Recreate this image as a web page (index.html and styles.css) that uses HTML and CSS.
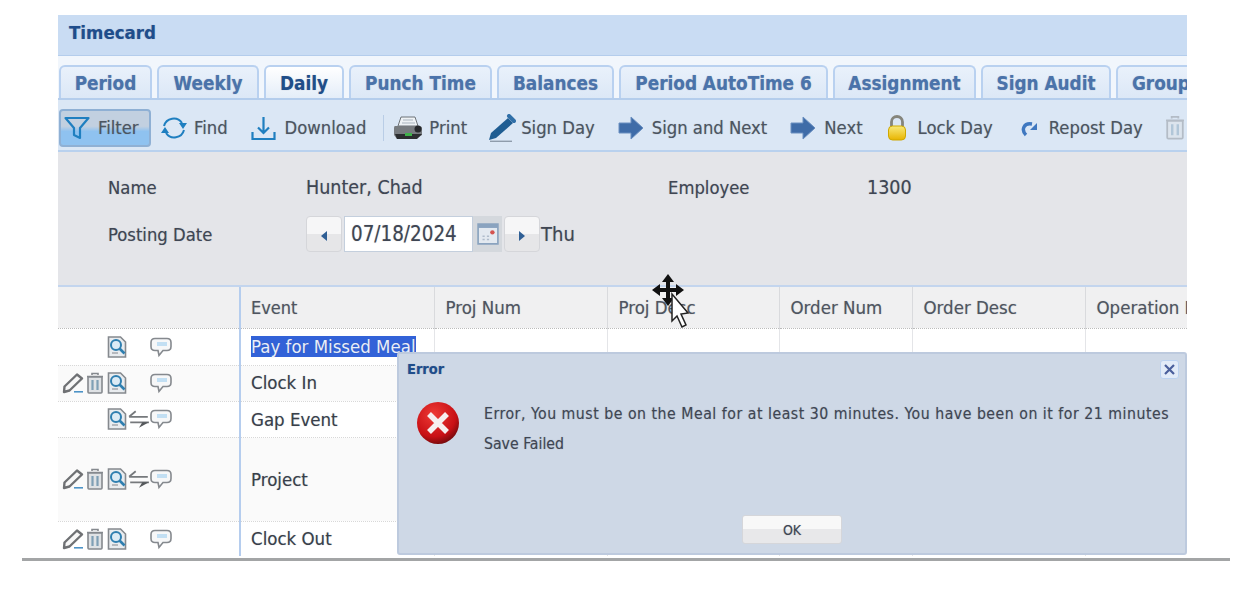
FILE: index.html
```html
<!DOCTYPE html>
<html lang="en">
<head>
  <meta charset="UTF-8">
  <title>Timecard</title>
  <link rel="stylesheet" href="styles.css">
</head>
<body>
  <svg class="sprites" width="0" height="0">
    <symbol id="i-search" viewBox="0 0 20 22">
      <path d="M1.500 1h12l5 5v15h-17z" fill="#e9ecef" stroke="#85898e" stroke-width="1.600"/>
      <circle cx="9" cy="9" r="5" fill="#dcebf5" stroke="#2f7fb0" stroke-width="2"/>
      <path d="M12.500 12.500l5 5" stroke="#2f7fb0" stroke-width="2.600"/>
      <path d="M5 17h6" stroke="#a9adb2" stroke-width="1.600"/>
    </symbol>
    <symbol id="i-comment" viewBox="0 0 22 20">
      <path d="M5 1.500h12q4 0 4 4v4q0 4-4 4h-4l-4 5-1-5H5q-4 0-4-4v-4q0-4 4-4z" fill="#f6f7f8" stroke="#85898e" stroke-width="1.600"/>
      <path d="M7 5h10v4H7z" fill="#c2dff3"/>
    </symbol>
    <symbol id="i-pencil" viewBox="0 0 22 20">
      <path d="M15 1.500l5 4L7.500 17.500 2 19 2.500 13.500z" fill="#f7f7f7" stroke="#6f7174" stroke-width="2.400" stroke-linejoin="round"/>
      <path d="M12 18.800h9" stroke="#4d93c7" stroke-width="1.600"/>
    </symbol>
    <symbol id="i-trash" viewBox="0 0 18 22">
      <path d="M1 4.500h16M6 3V1.500h6V3" fill="none" stroke="#85898e" stroke-width="1.600"/>
      <path d="M2 5h14v15q0 1-1 1H3q-1 0-1-1z" fill="#dfe2e5" stroke="#85898e" stroke-width="1.600"/>
      <path d="M6.500 8v10M11.500 8v10" stroke="#7f9fb5" stroke-width="2.200"/>
    </symbol>
    <symbol id="i-swap" viewBox="0 0 20 20">
      <path d="M1 8h17M1 8l6-5M2 13h17" fill="none" stroke="#76797c" stroke-width="1.600"/>
      <path d="M13 13l-3 5 9-5z" fill="#55585b"/>
    </symbol>
    <symbol id="i-arrow" viewBox="0 0 26 26">
      <path d="M1 8h12V2l12 11-12 11v-6H1z" fill="#3f6ca8" stroke="#6a8fc0" stroke-width="1"/>
    </symbol>
  </svg>

  <div class="timecard">
    <header class="titlebar">Timecard</header>

    <nav class="tabs">
      <span class="tab tab-period">Period</span>
      <span class="tab tab-weekly">Weekly</span>
      <span class="tab tab-daily active">Daily</span>
      <span class="tab tab-punch">Punch Time</span>
      <span class="tab tab-balances">Balances</span>
      <span class="tab tab-auto">Period AutoTime 6</span>
      <span class="tab tab-assign">Assignment</span>
      <span class="tab tab-audit">Sign Audit</span>
      <span class="tab tab-group">Group</span>
    </nav>

    <div class="toolbar">
      <button class="tool filter">
        <svg width="28" height="26" viewBox="0 0 28 26"><path d="M2.500 3h23L17 13v10l-6-3v-7z" fill="none" stroke="#1f7fc0" stroke-width="2.200" stroke-linejoin="round"/></svg>
        Filter
      </button>
      <button class="tool find">
        <svg width="28" height="26" viewBox="0 0 28 26"><path d="M4 11a10 10 0 0 1 18-3M24 15a10 10 0 0 1-18 3" fill="none" stroke="#1f7fc0" stroke-width="2"/><path d="M27 8h-8l4 6zM1 18h8l-4-6z" fill="#1f7fc0"/></svg>
        Find
      </button>
      <button class="tool download">
        <svg width="25" height="26" viewBox="0 0 25 26"><path d="M12.500 2v16M7 12.500l5.500 5.500 5.500-5.500M1.500 17v7h22v-7" fill="none" stroke="#1f7fc0" stroke-width="2.200"/></svg>
        Download
      </button>
      <span class="tool-sep"></span>
      <button class="tool print">
        <svg width="30" height="26" viewBox="0 0 30 26"><path d="M8 2h14l3 9H5z" fill="#eef2f5" stroke="#6d7378"/><path d="M10 5h10M9 8h13" stroke="#a9b3bd"/><path d="M2 11q-1 0-1 2v7l3 4h19l6-4v-7q0-2-4-2z" fill="#777b7f"/><path d="M2 19h27l-5 5H4z" fill="#2b2d30"/><path d="M12 18h7v3h-7z" fill="#3fb04a"/><circle cx="25" cy="14" r="3.500" fill="#26282b"/></svg>
        Print
      </button>
      <button class="tool sign">
        <svg width="28" height="28" viewBox="0 0 28 28"><path d="M20 4l5 5L8 24l-7 2 2-7z" fill="#1f5d92"/><path d="M21 2l5 5" stroke="#2f6fa8" stroke-width="4" stroke-linecap="round"/><path d="M2 27.300h22" stroke="#8f9cab" stroke-width="1.400"/></svg>
        Sign Day
      </button>
      <button class="tool sign-next">
        <svg width="26" height="26"><use href="#i-arrow"/></svg>
        Sign and Next
      </button>
      <button class="tool next">
        <svg width="26" height="26"><use href="#i-arrow"/></svg>
        Next
      </button>
      <button class="tool lock">
        <svg width="20" height="26" viewBox="0 0 20 26">
          <defs>
            <linearGradient id="gold" x1="0" y1="0" x2="0" y2="1">
              <stop offset="0" stop-color="#f9ea7a"/>
              <stop offset="1" stop-color="#e8b400"/>
            </linearGradient>
          </defs>
          <path d="M4.500 12V7a5.500 5.500 0 0 1 11 0v5" fill="none" stroke="#85857c" stroke-width="2.800"/>
          <rect x="1.500" y="11" width="17" height="14" rx="4" fill="url(#gold)" stroke="#cfa800"/>
        </svg>
        Lock Day
      </button>
      <button class="tool repost">
        <svg width="20" height="20" viewBox="0 0 20 20"><path d="M6 17q-4-4-2-8t8-3" fill="none" stroke="#3f78c0" stroke-width="3.400"/><path d="M17 5v7h-7z" fill="#3f78c0"/></svg>
        Repost Day
      </button>
      <button class="tool trash">
        <svg width="20" height="25"><use href="#i-trash"/></svg>
      </button>
    </div>

    <section class="details">
      <div class="detail-row name-row">
        <span class="label">Name</span>
        <span class="value name-value">Hunter, Chad</span>
        <span class="label employee">Employee</span>
        <span class="value">1300</span>
      </div>
      <div class="detail-row date-row">
        <span class="label">Posting Date</span>
        <div class="date-picker">
          <button class="date-step">
            <svg width="8" height="10" viewBox="0 0 8 10"><path d="M7 0v10L1 5z" fill="#2f5f95"/></svg>
          </button>
          <span class="date-input">07/18/2024</span>
          <button class="date-cal">
            <svg width="22" height="22" viewBox="0 0 20 20"><path d="M1 1h18v18H1z" fill="#e3e9f0" stroke="#8aa3bf" stroke-width="1.500"/><path d="M1 1h18v3.500H1z" fill="#8aa3bf"/><circle cx="14" cy="8.500" r="2" fill="#d4534f"/><path d="M5 12h2M9 12h2M5 15h2M9 15h2" stroke="#b0bccb" stroke-width="1.500"/></svg>
          </button>
          <button class="date-step">
            <svg width="8" height="10" viewBox="0 0 8 10"><path d="M1 0v10l6-5z" fill="#2f5f95"/></svg>
          </button>
          <span class="day">Thu</span>
        </div>
      </div>
    </section>

    <table class="grid">
      <thead>
        <tr>
          <th class="col-actions"></th>
          <th class="col-event">Event</th>
          <th class="col-num">Proj Num</th>
          <th class="col-desc">Proj Desc</th>
          <th class="col-order">Order Num</th>
          <th class="col-odesc">Order Desc</th>
          <th class="col-op">Operation Num</th>
        </tr>
      </thead>
      <tbody>
        <tr class="row-a">
          <td class="actions"><div class="icons"><i></i><i></i><svg class="ic"><use href="#i-search"/></svg><i></i><svg class="ic"><use href="#i-comment"/></svg></div></td>
          <td class="event"><span class="selected">Pay for Missed Meal</span></td>
          <td></td><td></td><td></td><td></td><td></td>
        </tr>
        <tr class="row-b">
          <td class="actions"><div class="icons"><svg class="ic"><use href="#i-pencil"/></svg><svg class="ic"><use href="#i-trash"/></svg><svg class="ic"><use href="#i-search"/></svg><i></i><svg class="ic"><use href="#i-comment"/></svg></div></td>
          <td class="event">Clock In</td>
          <td></td><td></td><td></td><td></td><td></td>
        </tr>
        <tr class="row-c">
          <td class="actions"><div class="icons"><i></i><i></i><svg class="ic"><use href="#i-search"/></svg><svg class="ic"><use href="#i-swap"/></svg><svg class="ic"><use href="#i-comment"/></svg></div></td>
          <td class="event">Gap Event</td>
          <td></td><td></td><td></td><td></td><td></td>
        </tr>
        <tr class="row-d">
          <td class="actions"><div class="icons"><svg class="ic"><use href="#i-pencil"/></svg><svg class="ic"><use href="#i-trash"/></svg><svg class="ic"><use href="#i-search"/></svg><svg class="ic"><use href="#i-swap"/></svg><svg class="ic"><use href="#i-comment"/></svg></div></td>
          <td class="event">Project</td>
          <td></td><td></td><td></td><td></td><td></td>
        </tr>
        <tr class="row-e">
          <td class="actions"><div class="icons"><svg class="ic"><use href="#i-pencil"/></svg><svg class="ic"><use href="#i-trash"/></svg><svg class="ic"><use href="#i-search"/></svg><i></i><svg class="ic"><use href="#i-comment"/></svg></div></td>
          <td class="event">Clock Out</td>
          <td></td><td></td><td></td><td></td><td></td>
        </tr>
      </tbody>
    </table>

    <div class="dialog">
      <div class="dialog-head">
        <span class="dialog-title">Error</span>
        <button class="dialog-close">
          <svg width="11" height="11" viewBox="0 0 11 11"><path d="M1 1l9 9M10 1l-9 9" stroke="#4a5f9c" stroke-width="2.200"/></svg>
        </button>
      </div>
      <div class="dialog-body">
        <svg class="err-icon" width="44" height="44" viewBox="0 0 44 44">
          <defs>
            <radialGradient id="err" cx="40%" cy="30%" r="75%">
              <stop offset="0" stop-color="#ee3a35"/>
              <stop offset="0.700" stop-color="#c81015"/>
              <stop offset="1" stop-color="#6a0a0c"/>
            </radialGradient>
          </defs>
          <circle cx="22" cy="22" r="21" fill="url(#err)"/>
          <path d="M13 13l18 18M31 13L13 31" stroke="#f6eeee" stroke-width="5.500"/>
        </svg>
        <div class="messages">
          <p class="msg-main">Error, You must be on the Meal for at least 30 minutes. You have been on it for 21 minutes</p>
          <p>Save Failed</p>
        </div>
      </div>
      <div class="dialog-foot"><button class="ok">OK</button></div>
    </div>

    <svg class="cursor" width="40" height="56" viewBox="0 0 40 56">
      <path d="M16 0l6 8h-4v6h6v-4l8 6-8 6v-4h-6v6h4l-6 8-6-8h4v-6H8v4l-8-6 8-6v4h6V8h-4z" fill="#111"/>
      <path d="M20 20v27l5-5 5 11 4-2-5-11 7-1z" fill="#fff" stroke="#222" stroke-width="1.500"/>
    </svg>
  </div>

  <div class="rule"></div>
</body>
</html>
```

FILE: styles.css
```css
body {
  margin: 0;
  padding-top: 15px;
  background: #fff;
  font-family: "DejaVu Sans", sans-serif;
  font-stretch: condensed;
  color: #3f4653;
  text-shadow: 0 0 1px rgba(60, 70, 90, 0.4);
}
button {
  font: inherit;
  color: inherit;
  border: none;
  background: none;
  padding: 0;
  text-shadow: inherit;
}
.sprites {
  position: absolute;
}
.timecard {
  position: relative;
  margin-left: 58px;
  width: 1129px;
  height: 541px;
  overflow: hidden;
}
.titlebar {
  height: 40px;
  line-height: 36px;
  padding-left: 11px;
  background: #c9dcf3;
  border-bottom: 1px solid #b4cdec;
  font-size: 18.500px;
  font-weight: bold;
  color: #1e4d8c;
}

/* tabs */
.tabs {
  display: flex;
  gap: 5px;
  height: 44px;
  padding: 9px 0 0 1px;
  box-sizing: border-box;
  background: #f1f6fc;
  border-bottom: 2px solid #b4cdec;
  overflow: hidden;
}
.tab {
  flex: none;
  box-sizing: border-box;
  height: 35px;
  line-height: 34px;
  text-align: center;
  border: 2px solid #b9d1f0;
  border-bottom: none;
  border-radius: 6px 6px 0 0;
  background: linear-gradient(#e9f1fb, #dbe7f6);
  font-size: 18.800px;
  font-weight: bold;
  color: #4a73ab;
}
.tab.active {
  background: linear-gradient(#fff, #e2ecf8);
  color: #1f4e8a;
}
.tab-period { width: 93px; }
.tab-weekly { width: 102px; }
.tab-daily { width: 80px; }
.tab-punch { width: 143px; }
.tab-balances { width: 117px; }
.tab-auto { width: 209px; }
.tab-assign { width: 143px; }
.tab-audit { width: 130px; }
.tab-group { width: 110px; text-align: left; padding-left: 14px; }

/* toolbar */
.toolbar {
  display: flex;
  align-items: center;
  height: 52px;
  box-sizing: border-box;
  padding: 5px 0 0 1px;
  background: #dbe7f5;
  border-bottom: 2px solid #b9d1ee;
  font-size: 18.300px;
  color: #4c5560;
  white-space: nowrap;
}
.tool {
  display: flex;
  align-items: center;
  flex: none;
  gap: 6px;
}
.filter {
  width: 92px;
  height: 38px;
  box-sizing: border-box;
  padding-left: 2px;
  gap: 7px;
  border: 2px solid #8fb0d4;
  border-radius: 4px;
  background: linear-gradient(#c2d0e0 45%, #8fc2f0 60%);
}
.find { margin-left: 9px; }
.download { margin-left: 23px; gap: 9px; }
.tool-sep {
  flex: none;
  width: 1px;
  height: 26px;
  margin: 0 9px 0 17px;
  background: #b9cde6;
}
.sign { margin-left: 21px; gap: 5px; }
.sign-next { margin-left: 23px; gap: 8px; }
.next { margin-left: 23px; gap: 8px; }
.lock { margin-left: 24px; gap: 11px; }
.repost { margin-left: 27px; gap: 9px; }
.trash { margin-left: 22px; opacity: 0.45; }

/* details form */
.details {
  box-sizing: border-box;
  height: 133px;
  padding-top: 17px;
  background: #e4e5e9;
  font-size: 18.300px;
}
.detail-row {
  display: flex;
  align-items: center;
  padding-left: 50px;
}
.name-row {
  height: 36px;
}
.date-row {
  height: 36px;
  margin-top: 11px;
}
.label {
  flex: none;
  width: 198px;
}
.name-row .name-value {
  flex: none;
  width: 362px;
  font-size: 20px;
}
.name-row .employee {
  width: 199px;
}
.name-row .value {
  font-size: 19.500px;
}
.date-picker {
  display: flex;
  align-items: center;
  height: 36px;
}
.date-step {
  width: 36px;
  height: 36px;
  border: 1px solid #d5d6da;
  border-radius: 4px;
  box-sizing: border-box;
  background: linear-gradient(#f6f6f7 50%, #e6e6e8 50%);
}
.date-input {
  box-sizing: border-box;
  width: 129px;
  height: 36px;
  margin-left: 2px;
  line-height: 34px;
  padding-left: 6px;
  background: #fff;
  border: 1px solid #c4cfdd;
  font-size: 20.400px;
}
.date-cal {
  display: flex;
  align-items: center;
  justify-content: center;
  width: 29px;
  height: 36px;
  margin-right: 2px;
  background: #d4d8dd;
}
.day {
  margin-left: 1px;
  font-size: 20px;
}

/* grid */
.grid {
  table-layout: fixed;
  width: 1177px;
  border-collapse: collapse;
  background: #fff;
  font-size: 18.500px;
}
.grid th {
  height: 42px;
  padding: 0 0 0 11px;
  box-sizing: border-box;
  text-align: left;
  font-weight: normal;
  color: #4f5560;
  background: #f0f0f1;
  border-top: 2px solid #c3d5ee;
  border-bottom: 1px dotted #bbb;
  border-left: 1px solid #d9dadd;
  white-space: nowrap;
  overflow: hidden;
}
.grid td {
  padding: 0 0 0 10px;
  border-left: 1px solid #e4e5e8;
  border-bottom: 1px dotted #d8d8d8;
}
.grid .col-actions { width: 182px; border-left: none; }
.grid .col-event {
  width: 194px;
  padding-left: 10px;
  border-left: 2px solid #b5cdee;
  font-size: 18px;
}
.col-num { width: 173px; }
.col-desc { width: 172px; }
.col-order { width: 133px; }
.col-odesc { width: 173px; }
.col-op { width: 150px; }
.grid .actions {
  padding: 0 0 0 4px;
  border-left: none;
}
.grid .event {
  border-left: 2px solid #b5cdee;
  white-space: nowrap;
  overflow: hidden;
  color: #383f4a;
}
.grid .row-b .event,
.grid .row-e .event {
  padding-bottom: 2px;
}
.row-a { height: 37px; }
.row-b { height: 36px; background: #fafafa; }
.row-c { height: 36px; }
.row-d { height: 84px; background: #fafafa; }
.row-e { height: 36px; }
.icons {
  display: flex;
  align-items: center;
}
.icons i,
.ic {
  flex: none;
  width: 22px;
  height: 22px;
}
.selected {
  background: #3262d8;
  color: #e8eefc;
}

/* error dialog */
.dialog {
  position: absolute;
  left: 339px;
  top: 337px;
  width: 790px;
  height: 203px;
  box-sizing: border-box;
  background: #ced8e6;
  border: 2px solid #bdcade;
  border-radius: 3px;
}
.dialog-head {
  display: flex;
  justify-content: space-between;
  align-items: center;
  height: 30px;
  padding: 0 6px 0 8px;
}
.dialog-title {
  font-size: 14.500px;
  font-weight: bold;
  color: #1e4d8c;
}
.dialog-close {
  display: flex;
  align-items: center;
  justify-content: center;
  width: 19px;
  height: 19px;
  box-sizing: border-box;
  border: 1px solid #bcd2f0;
  border-radius: 3px;
  background: #e2ebf8;
}
.dialog-body {
  display: flex;
  height: 128px;
  padding: 17px 0 0 17px;
  box-sizing: border-box;
}
.err-icon {
  flex: none;
}
.messages {
  margin: 0 0 0 24px;
  font-size: 15.700px;
}
.messages p {
  margin: 3px 0 11px;
  white-space: nowrap;
}
.messages .msg-main {
  letter-spacing: 0.520px;
}
.dialog-foot {
  display: flex;
  justify-content: center;
  padding-top: 3px;
}
.ok {
  width: 100px;
  height: 29px;
  border: 1px solid #d5d6da;
  border-radius: 3px;
  background: linear-gradient(#f8f8f8 50%, #e8e8ea 50%);
  font-size: 14px;
}

.cursor {
  position: absolute;
  left: 594px;
  top: 259px;
}

.rule {
  height: 3px;
  margin: 2px 21px 0 22px;
  background: #a3a5a6;
}
```
